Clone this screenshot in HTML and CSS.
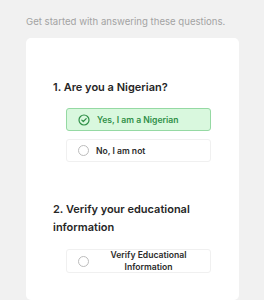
FILE: index.html
```html
<!DOCTYPE html>
<html>
<head>
<meta charset="utf-8">
<link rel="stylesheet" href="styles.css">
</head>
<body>
<div class="page">
  <p class="intro">Get started with answering these questions.</p>
  <div class="card">
    <section class="question q1">
      <h2 class="q-title">1. Are you a Nigerian?</h2>
      <div class="options">
        <div class="option selected">
          <svg class="icon" viewBox="0 0 12 12" width="12" height="12">
            <circle cx="6" cy="6" r="5" fill="none" stroke="#2f8f47" stroke-width="1.2"/>
            <path d="M3.8 6.1 L5.3 7.5 L8.2 4.6" fill="none" stroke="#2f8f47" stroke-width="1.2" stroke-linecap="round" stroke-linejoin="round"/>
          </svg>
          <span class="label">Yes, I am a Nigerian</span>
        </div>
        <div class="option">
          <span class="radio"></span>
          <span class="label">No, I am not</span>
        </div>
      </div>
    </section>
    <section class="question q2">
      <h2 class="q-title">2. Verify your educational information</h2>
      <div class="options">
        <div class="option tall">
          <span class="radio"></span>
          <span class="label centered">Verify Educational Information</span>
        </div>
      </div>
    </section>
  </div>
</div>
</body>
</html>
```
FILE: styles.css
```css
html, body {
  margin: 0;
  padding: 0;
  background: #f1f1f1;
  font-family: Inter, "Noto Sans", sans-serif;
  overflow: hidden;
}
.page {
  padding: 16px 25px 0 26px;
}
.intro {
  margin: 0;
  font-size: 9.6px;
  line-height: 12px;
  color: #a3a3a3;
}
.card {
  box-sizing: border-box;
  margin-top: 10px;
  background: #ffffff;
  border-radius: 5px;
  padding: 40px 27px 0 27px;
  height: 262px;
}
.q-title {
  margin: 0;
  font-size: 11px;
  line-height: 18px;
  font-weight: 600;
  color: #262626;
}
.options {
  margin: 12px 0 0 13px;
  width: 145px;
  display: flex;
  flex-direction: column;
  gap: 8px;
}
.option {
  box-sizing: border-box;
  height: 23px;
  display: flex;
  align-items: center;
  padding: 0 10px 0 11px;
  border: 1px solid #f0f0f0;
  border-radius: 3px;
  background: #fff;
}
.option.selected {
  background: #d9f8de;
  border-color: #95d9a3;
}
.icon {
  flex: none;
  display: block;
}
.radio {
  flex: none;
  box-sizing: border-box;
  width: 11px;
  height: 11px;
  border-radius: 50%;
  border: 1px solid #bcbcbc;
}
.label {
  margin-left: 7px;
  font-size: 8.6px;
  font-weight: 600;
  color: #2b2b2b;
  white-space: nowrap;
}
.selected .label {
  color: #2f8f47;
}
.q2 {
  margin-top: 38px;
}
.q2 .options {
  margin-top: 13px;
}
.option.tall {
  height: 24px;
}
.label.centered {
  flex: 1;
  white-space: normal;
  text-align: center;
  line-height: 12.5px;
  margin-left: 0;
  padding: 0 2px 0 10px;
}
```
